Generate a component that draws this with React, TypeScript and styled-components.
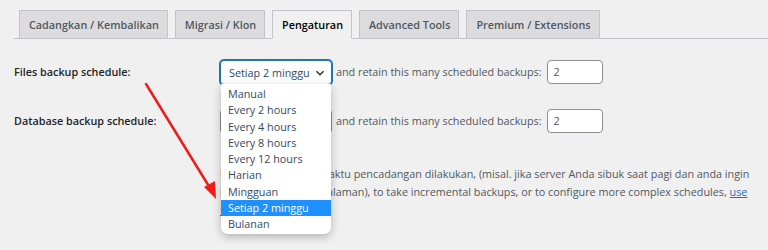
import React from 'react';
import styled, { createGlobalStyle } from 'styled-components';

const GlobalStyle = createGlobalStyle`
  body {
    margin: 0;
    background: #f0f0f1;
    font-family: "Open Sans", "Noto Sans", sans-serif;
    color: #1d2327;
  }
`;

const StyledPage = styled.div`
  position: relative;
  width: 768px;
  height: 250px;
  overflow: hidden;
  padding-top: 10px;
  box-sizing: border-box;
`;

const StyledTabBar = styled.nav`
  display: flex;
  gap: 7px;
  margin-left: 14px;
  padding-left: 5px;
  border-bottom: 1px solid #c3c4c7;
`;

const StyledTab = styled.a<{ $active?: boolean }>`
  box-sizing: border-box;
  height: 29px;
  padding: 0 8px 0 9px;
  display: flex;
  align-items: center;
  font-size: 10.8px;
  font-weight: 600;
  text-decoration: none;
  color: ${p => (p.$active ? '#000' : '#50575e')};
  background: ${p => (p.$active ? '#f0f0f1' : '#dcdcde')};
  border: 1px solid #c3c4c7;
  border-bottom-color: ${p => (p.$active ? '#f0f0f1' : '#c3c4c7')};
  margin-bottom: -1px;
  white-space: nowrap;
`;

const StyledForm = styled.div`
  display: grid;
  grid-template-columns: 206px auto;
  row-gap: 22px;
  padding: 19px 0 0 14px;
`;

const StyledLabel = styled.div`
  font-size: 10.8px;
  font-weight: 600;
  color: #1d2327;
  align-self: center;
`;

const StyledControls = styled.div`
  display: flex;
  align-items: center;
  gap: 4px;
  font-size: 10.8px;
  color: #50575e;
  white-space: nowrap;
`;

const StyledSelectWrap = styled.div`
  position: relative;
`;

const StyledSelect = styled.div<{ $focused?: boolean }>`
  box-sizing: border-box;
  width: 112px;
  height: 25px;
  display: flex;
  align-items: center;
  justify-content: space-between;
  padding: 0 6px 0 8px;
  font-size: 10.8px;
  color: ${p => (p.$focused ? '#2c4a6b' : '#2c3338')};
  background: #fff;
  border: 1px solid ${p => (p.$focused ? '#2271b1' : '#8c8f94')};
  box-shadow: ${p => (p.$focused ? '0 0 0 1px #2271b1' : 'none')};
  border-radius: 4px;
  margin-top: 2px;
`;

const StyledInput = styled.div`
  box-sizing: border-box;
  width: 56px;
  height: 24px;
  display: flex;
  align-items: center;
  padding-left: 6px;
  font-size: 10.8px;
  color: #50575e;
  background: #fff;
  border: 1px solid #8c8f94;
  border-radius: 4px;
  margin-left: 1px;
`;

const StyledMenu = styled.ul`
  position: absolute;
  top: 26px;
  left: 1px;
  width: 110px;
  margin: 0;
  padding: 2px 0 1px;
  list-style: none;
  background: #fff;
  border-radius: 0 0 7px 7px;
  box-shadow: 0 3px 8px rgba(0, 0, 0, 0.25);
  z-index: 2;
`;

const StyledOption = styled.li<{ $selected?: boolean }>`
  height: 16.3px;
  line-height: 16.3px;
  padding-left: 7px;
  font-size: 10.8px;
  color: ${p => (p.$selected ? '#fff' : '#34495e')};
  background: ${p => (p.$selected ? '#1e90ff' : 'transparent')};
  white-space: nowrap;
`;

const StyledNote = styled.p`
  margin: 31px 0 0 220px;
  font-size: 10.8px;
  line-height: 18px;
  color: #50575e;
  white-space: nowrap;
`;

const StyledLink = styled.a`
  color: #2271b1;
  text-decoration: underline;
`;

const StyledArrow = styled.svg`
  position: absolute;
  left: 0;
  top: 0;
  pointer-events: none;
  z-index: 3;
`;

const tabs = ['Cadangkan / Kembalikan', 'Migrasi / Klon', 'Pengaturan', 'Advanced Tools', 'Premium / Extensions'];
const options = ['Manual', 'Every 2 hours', 'Every 4 hours', 'Every 8 hours', 'Every 12 hours', 'Harian', 'Mingguan', 'Setiap 2 minggu', 'Bulanan'];

function Chevron() {
  return (
    <svg width="10" height="10" viewBox="0 0 10 10">
      <path d="M1.5 3.2 L5 6.7 L8.5 3.2" fill="none" stroke="#2c3338" strokeWidth="1.6" />
    </svg>
  );
}

function App() {
  return (
    <StyledPage>
      <GlobalStyle />
      <StyledTabBar>
        {tabs.map(t => (
          <StyledTab key={t} $active={t === 'Pengaturan'}>{t}</StyledTab>
        ))}
      </StyledTabBar>

      <StyledForm>
        <StyledLabel>Files backup schedule:</StyledLabel>
        <StyledControls>
          <StyledSelectWrap>
            <StyledSelect $focused>
              Setiap 2 minggu <Chevron />
            </StyledSelect>
            <StyledMenu>
              {options.map(o => (
                <StyledOption key={o} $selected={o === 'Setiap 2 minggu'}>{o}</StyledOption>
              ))}
            </StyledMenu>
          </StyledSelectWrap>
          and retain this many scheduled backups:
          <StyledInput>2</StyledInput>
        </StyledControls>

        <StyledLabel>Database backup schedule:</StyledLabel>
        <StyledControls>
          <StyledSelectWrap>
            <StyledSelect>
              Setiap 2 minggu <Chevron />
            </StyledSelect>
          </StyledSelectWrap>
          and retain this many scheduled backups:
          <StyledInput>2</StyledInput>
        </StyledControls>
      </StyledForm>

      <StyledNote>
        Untuk menentukan waktu pencadangan dilakukan, (misal. jika server Anda sibuk saat pagi dan anda ingin
        <br />
        menjalankannya semalaman), to take incremental backups, or to configure more complex schedules, <StyledLink href="#">use</StyledLink>
        <br />
        <StyledLink href="#">UpdraftPlus</StyledLink>
      </StyledNote>

      <StyledArrow width="768" height="250">
        <line x1="146" y1="84" x2="210" y2="188" stroke="#f01c1c" strokeWidth="2.5" strokeLinecap="round" />
        <polygon points="216,199 204,187 215,181" fill="#f01c1c" />
      </StyledArrow>
    </StyledPage>
  );
}

export default App;
